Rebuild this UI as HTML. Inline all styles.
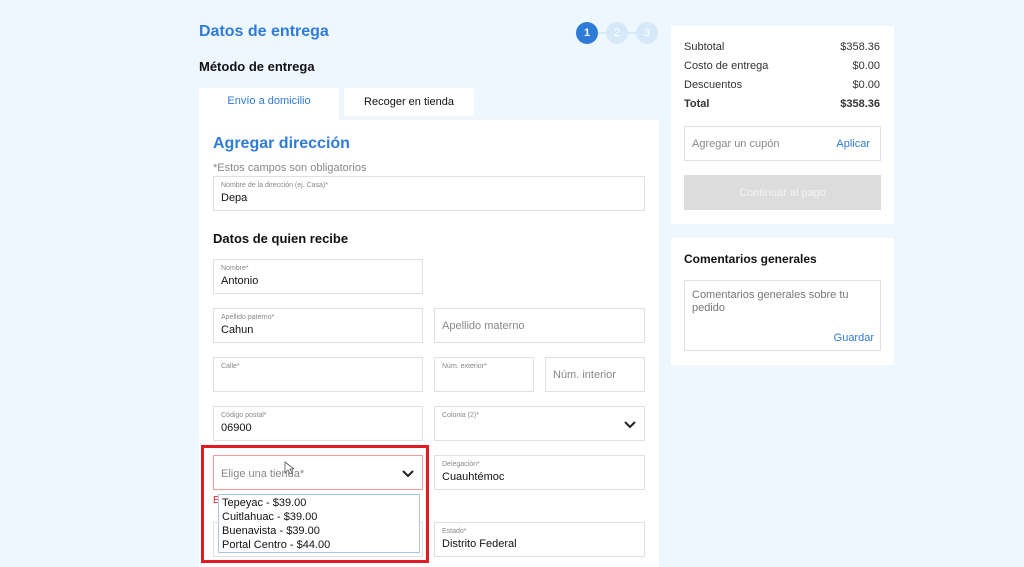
<!DOCTYPE html>
<html><head><meta charset="utf-8"><style>
*{box-sizing:border-box;margin:0;padding:0}
body{width:1024px;height:567px;overflow:hidden;background:#eef6fe;font-family:"Liberation Sans",sans-serif;position:relative;color:#111}
.a{position:absolute}
.fld{position:absolute;background:#fff;border:1px solid #e0e0e0}
.lb{position:absolute;left:7px;top:5px;font-size:7px;color:#888}
.vl{position:absolute;left:7px;top:15px;font-size:11px;color:#111}
.ph{position:absolute;left:7px;top:11px;font-size:11px;color:#888}
.chev{position:absolute;right:8px;top:12px;width:12px;height:10px}
.blue{color:#2f7bd8}
.row{position:absolute;left:684px;width:196px;font-size:11px;color:#333}
.row span{position:absolute;right:0}
</style></head><body>
<div class="a blue" style="left:199px;top:23px;font-size:16px;font-weight:bold">Datos de entrega</div>
<div class="a" style="left:598px;top:32px;width:40px;height:2px;background:#d6e9f8"></div>
<div class="a" style="left:576px;top:22px;width:22px;height:22px;border-radius:50%;background:#2f7bd8;color:#fff;font-size:11px;font-weight:bold;text-align:center;line-height:22px">1</div>
<div class="a" style="left:606px;top:22px;width:22px;height:22px;border-radius:50%;background:#d6e9f8;color:#fff;font-size:11px;text-align:center;line-height:22px">2</div>
<div class="a" style="left:636px;top:22px;width:22px;height:22px;border-radius:50%;background:#d6e9f8;color:#fff;font-size:11px;text-align:center;line-height:22px">3</div>
<div class="a" style="left:199px;top:59px;font-size:13px;font-weight:bold">Método de entrega</div>
<div class="a" style="left:199px;top:88px;width:140px;height:40px;background:#fff"></div>
<div class="a blue" style="left:199px;top:95px;width:140px;text-align:center;font-size:11px">Envío a domicilio</div>
<div class="a" style="left:344px;top:88px;width:130px;height:28px;background:#fff;text-align:center;font-size:11px;line-height:28px">Recoger en tienda</div>
<div class="a" style="left:199px;top:120px;width:460px;height:447px;background:#fff"></div>
<div class="a blue" style="left:213px;top:135px;font-size:16px;font-weight:bold">Agregar dirección</div>
<div class="a" style="left:213px;top:162px;font-size:11px;color:#888">*Estos campos son obligatorios</div>
<div class="fld" style="left:213px;top:176px;width:432px;height:35px"><div class="lb">Nombre de la dirección (ej. Casa)*</div><div class="vl">Depa</div></div>
<div class="a" style="left:213px;top:231px;font-size:13px;font-weight:bold">Datos de quien recibe</div>
<div class="fld" style="left:213px;top:259px;width:210px;height:35px"><div class="lb">Nombre*</div><div class="vl">Antonio</div></div>
<div class="fld" style="left:213px;top:308px;width:210px;height:35px"><div class="lb">Apellido paterno*</div><div class="vl">Cahun</div></div>
<div class="fld" style="left:434px;top:308px;width:211px;height:35px"><div class="ph">Apellido materno</div></div>
<div class="fld" style="left:213px;top:357px;width:210px;height:35px"><div class="lb">Calle*</div></div>
<div class="fld" style="left:434px;top:357px;width:100px;height:35px"><div class="lb">Núm. exterior*</div></div>
<div class="fld" style="left:545px;top:357px;width:100px;height:35px"><div class="ph">Núm. interior</div></div>
<div class="fld" style="left:213px;top:406px;width:210px;height:35px"><div class="lb">Código postal*</div><div class="vl">06900</div></div>
<div class="fld" style="left:434px;top:406px;width:211px;height:35px"><div class="lb">Colonia (2)*</div><svg class="chev" viewBox="0 0 12 10"><path d="M1 3l5 5 5-5" stroke="#222" stroke-width="2" fill="none"/></svg></div>
<div class="fld" style="left:213px;top:455px;width:210px;height:35px;border-color:#f39a9a"><div class="ph" style="top:12px">Elige una tienda*</div><svg class="chev" viewBox="0 0 12 10"><path d="M1 3l5 5 5-5" stroke="#222" stroke-width="2" fill="none"/></svg></div>
<div class="fld" style="left:434px;top:455px;width:211px;height:35px"><div class="lb">Delegación*</div><div class="vl">Cuauhtémoc</div></div>
<div class="a" style="left:213px;top:495px;font-size:10px;color:#e02020">E</div>
<div class="fld" style="left:213px;top:522px;width:210px;height:35px"></div>
<div class="fld" style="left:434px;top:522px;width:211px;height:35px"><div class="lb">Estado*</div><div class="vl">Distrito Federal</div></div>
<div class="a" style="left:218px;top:494px;width:202px;height:59px;background:#fff;border:1px solid #a8c4e8;font-size:11px;line-height:14px;padding:1px 3px">Tepeyac - $39.00<br>Cuitlahuac - $39.00<br>Buenavista - $39.00<br>Portal Centro - $44.00</div>
<div class="a" style="left:201px;top:445px;width:228px;height:118px;border:3px solid #e21b23"></div>
<svg class="a" style="left:284px;top:461px" width="10" height="14" viewBox="0 0 10 14"><path d="M1 1v11l3-3 2 4 2-1-2-4h4z" fill="#fff" stroke="#555" stroke-width=".8"/></svg>

<div class="a" style="left:671px;top:26px;width:223px;height:198px;background:#fff"></div>
<div class="row" style="top:41px">Subtotal<span>$358.36</span></div>
<div class="row" style="top:60px">Costo de entrega<span>$0.00</span></div>
<div class="row" style="top:79px">Descuentos<span>$0.00</span></div>
<div class="row" style="top:98px;font-weight:bold">Total<span>$358.36</span></div>
<div class="fld" style="left:684px;top:126px;width:197px;height:35px"><div class="ph" style="top:11px">Agregar un cupón</div><div class="a blue" style="right:10px;top:11px;font-size:11px">Aplicar</div></div>
<div class="a" style="left:684px;top:175px;width:197px;height:35px;background:#dcdcdc;color:#f4f4f4;font-size:11px;text-align:center;line-height:36px">Continuar al pago</div>
<div class="a" style="left:671px;top:238px;width:223px;height:127px;background:#fff"></div>
<div class="a" style="left:684px;top:252px;font-size:12px;font-weight:bold">Comentarios generales</div>
<div class="fld" style="left:684px;top:280px;width:197px;height:71px"><div class="a" style="left:7px;top:8px;font-size:11px;color:#777;line-height:13px;width:180px">Comentarios generales sobre tu pedido</div><div class="a blue" style="right:6px;top:51px;font-size:11px">Guardar</div></div>
</body></html>
